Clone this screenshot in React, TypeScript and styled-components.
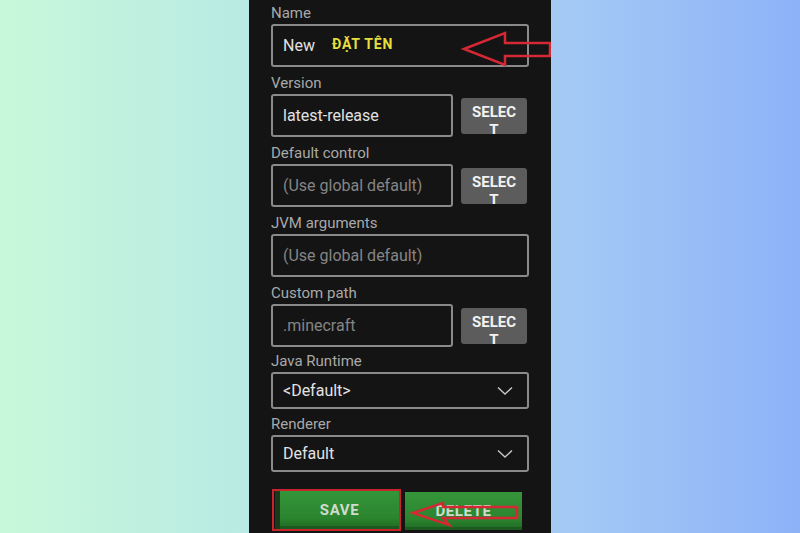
import React from "react";
import styled, { createGlobalStyle } from "styled-components";

const Global = createGlobalStyle`
  html, body { margin: 0; padding: 0; }
  body {
    width: 800px;
    height: 533px;
    overflow: hidden;
    font-family: Roboto, "Noto Sans", "Liberation Sans", sans-serif;
  }
  #root { height: 533px; }
`;

const Page = styled.div`
  width: 800px;
  height: 533px;
  display: flex;
  justify-content: center;
  background: linear-gradient(90deg, #c8f8d9 0%, #b9eae4 31%, #a5cbf4 69%, #8eb2f8 100%);
`;

const Phone = styled.div`
  position: relative;
  width: 302px;
  height: 533px;
  background: #141414;
  box-sizing: border-box;
  padding: 4px 22px 0 22px;
  display: flex;
  flex-direction: column;
  overflow: hidden;
`;

const Field = styled.div<{ $gap?: number }>`
  display: flex;
  flex-direction: column;
  margin-bottom: ${(p) => p.$gap ?? 7}px;
`;

const Label = styled.div`
  font-size: 15px;
  line-height: 18px;
  color: #a9a9a9;
  margin-bottom: 2px;
  white-space: nowrap;
`;

const Row = styled.div`
  display: flex;
  align-items: center;
  gap: 8px;
`;

const Input = styled.div<{ $w?: number; $h?: number; $muted?: boolean }>`
  box-sizing: border-box;
  width: ${(p) => p.$w ?? 258}px;
  height: ${(p) => p.$h ?? 43}px;
  border: 2px solid #8a8a8a;
  border-radius: 3px;
  padding: 0 10px;
  display: flex;
  align-items: center;
  font-size: 16px;
  color: ${(p) => (p.$muted ? "#858585" : "#e2e2e2")};
  white-space: nowrap;
`;

const Hint = styled.span`
  margin-left: 17px;
  margin-top: -3px;
  color: #e6df3e;
  font-weight: 700;
  font-size: 14px;
  letter-spacing: 0.8px;
`;

const SelectBtn = styled.div`
  box-sizing: border-box;
  width: 66px;
  height: 36px;
  background: #5c5c5c;
  border-radius: 3px;
  color: #f2f2f2;
  font-weight: 700;
  font-size: 15px;
  line-height: 18px;
  text-align: center;
  padding: 5px 8px 0 8px;
  overflow: hidden;
  word-break: break-all;
`;

const Dropdown = styled(Input)`
  justify-content: space-between;
  padding-right: 14px;
`;

const ButtonRow = styled.div`
  display: flex;
  align-items: flex-start;
  gap: 4px;
  margin-top: 17px;
  margin-left: 1px;
`;

const Highlight = styled.div`
  border: 2px solid #c9232c;
  padding: 0 0 0 1px;
  display: flex;
`;

const GreenButton = styled.div<{ $w: number; $mt?: number }>`
  box-sizing: border-box;
  width: ${(p) => p.$w}px;
  height: 38px;
  margin-top: ${(p) => p.$mt ?? 0}px;
  background: linear-gradient(180deg, #35953a 0%, #2b852f 70%, #1f6a22 100%);
  border-left: 5px solid #1a3a1a;
  box-shadow: inset 0 -3px 0 #1c5a1f;
  color: #cfdccd;
  font-weight: 700;
  font-size: 15px;
  letter-spacing: 0.6px;
  display: flex;
  align-items: center;
  justify-content: center;
`;

const DeleteButton = styled(GreenButton)`
  border-left: none;
`;

const Overlay = styled.svg`
  position: absolute;
  left: 0;
  top: 0;
  pointer-events: none;
`;

const Chevron = () => (
  <svg width="16" height="10" viewBox="0 0 16 10">
    <polyline points="1,1.5 8,8 15,1.5" fill="none" stroke="#c8c8c8" strokeWidth="1.4" />
  </svg>
);

export default function App() {
  return (
    <>
      <Global />
      <Page>
        <Phone>
          <Field>
            <Label>Name</Label>
            <Input>
              New<Hint>ĐẶT TÊN</Hint>
            </Input>
          </Field>
          <Field>
            <Label>Version</Label>
            <Row>
              <Input $w={182}>latest-release</Input>
              <SelectBtn>SELECT</SelectBtn>
            </Row>
          </Field>
          <Field>
            <Label>Default control</Label>
            <Row>
              <Input $w={182} $muted>(Use global default)</Input>
              <SelectBtn>SELECT</SelectBtn>
            </Row>
          </Field>
          <Field>
            <Label>JVM arguments</Label>
            <Input $muted>(Use global default)</Input>
          </Field>
          <Field $gap={5}>
            <Label>Custom path</Label>
            <Row>
              <Input $w={182} $muted>.minecraft</Input>
              <SelectBtn>SELECT</SelectBtn>
            </Row>
          </Field>
          <Field $gap={6}>
            <Label>Java Runtime</Label>
            <Dropdown $h={37}>
              &lt;Default&gt;
              <Chevron />
            </Dropdown>
          </Field>
          <Field $gap={0}>
            <Label>Renderer</Label>
            <Dropdown $h={37}>
              Default
              <Chevron />
            </Dropdown>
          </Field>
          <ButtonRow>
            <Highlight>
              <GreenButton $w={124} $mt={0}>SAVE</GreenButton>
            </Highlight>
            <DeleteButton $w={117} $mt={3}>DELETE</DeleteButton>
          </ButtonRow>
          <Overlay width="302" height="533" viewBox="0 0 302 533">
            <polygon
              points="215,49 256,33 256,43 301,43 301,56 256,56 256,65"
              fill="none"
              stroke="#d42834"
              strokeWidth="2.5"
              strokeLinejoin="miter"
            />
            <polygon
              points="164,513 194,503 194,507 268,507 268,518 194,518 200,525"
              fill="none"
              stroke="#d42834"
              strokeWidth="2.5"
              strokeLinejoin="miter"
            />
          </Overlay>
        </Phone>
      </Page>
    </>
  );
}
